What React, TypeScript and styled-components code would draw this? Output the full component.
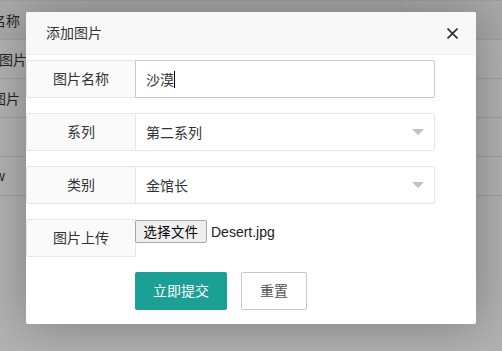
import styled, { createGlobalStyle } from "styled-components";

const GlobalStyle = createGlobalStyle`
    html, body {
        margin: 0;
        padding: 0;
        background: #ffffff;
    }
    body {
        font-family: "Liberation Sans", "Noto Sans CJK SC", sans-serif;
        font-size: 14px;
        color: #333;
    }
    * {
        box-sizing: border-box;
    }
`

const ROWS = [
    {name: "中英文图片"},
    {name: "封面图片"},
    {name: ""},
    {name: "new"},
]

const FIELDS = [
    {label: "系列", value: "第二系列"},
    {label: "类别", value: "金馆长"},
]

const App = () => {
    return (
        <>
            <GlobalStyle/>
            <Page>
                {/* 뒤에 깔린 목록 테이블 */}
                <Table>
                    <HeadRow>
                        <NameCell>图片名称</NameCell>
                        <Cell $divider/>
                        <Cell/>
                    </HeadRow>
                    {
                        ROWS.map((row, i) => (
                            <BodyRow key={i}>
                                <NameCell>{row.name}</NameCell>
                                <Cell/>
                                <Cell/>
                            </BodyRow>
                        ))
                    }
                </Table>

                <Shade/>

                <Layer>
                    <LayerTitle>
                        添加图片
                        <CloseBtn>
                            <svg width="11" height="11" viewBox="0 0 11 11">
                                <path d="M0.5 0.5 L10.5 10.5 M10.5 0.5 L0.5 10.5" stroke="#2e2d3c" strokeWidth="1.6"/>
                            </svg>
                        </CloseBtn>
                    </LayerTitle>
                    <LayerContent>
                        <FormItem>
                            <FormLabel>图片名称</FormLabel>
                            <InputBlock>
                                <TextInput $focused={true}>沙漠<Caret/></TextInput>
                            </InputBlock>
                        </FormItem>
                        {
                            FIELDS.map((f) => (
                                <FormItem key={f.label}>
                                    <FormLabel>{f.label}</FormLabel>
                                    <InputBlock>
                                        <TextInput $focused={false}>
                                            {f.value}
                                            <SelectEdge/>
                                        </TextInput>
                                    </InputBlock>
                                </FormItem>
                            ))
                        }
                        <FormItem>
                            <FormLabel>图片上传</FormLabel>
                            <FileBlock>
                                <FileButton>选择文件</FileButton>
                                <FileName>Desert.jpg</FileName>
                            </FileBlock>
                        </FormItem>
                        <ButtonRow>
                            <Btn $label={"submit"}>立即提交</Btn>
                            <Btn $label={"reset"}>重置</Btn>
                        </ButtonRow>
                    </LayerContent>
                </Layer>
            </Page>
        </>
    )
}

export default App

const Page = styled.div`
    position: relative;
    width: 502px;
    height: 351px;
    overflow: hidden;
`

const Table = styled.div`
    margin-left: -64px;
    padding-top: 1px;
    width: 600px;
    border-top: 1px solid #e6e6e6;
`

const HeadRow = styled.div`
    display: grid;
    grid-template-columns: 112px 354px 1fr;
    height: 39px;
    background: #f2f2f2;
    border-bottom: 1px solid #e6e6e6;
    margin-top: -1px;
`

const BodyRow = styled.div`
    display: grid;
    grid-template-columns: 112px 354px 1fr;
    height: 39px;
    border-bottom: 1px solid #e6e6e6;
`

const NameCell = styled.div`
    display: flex;
    align-items: center;
    justify-content: center;
    white-space: nowrap;
    color: #333;
`

const Cell = styled.div<{ $divider?: boolean }>`
    border-right: ${(props) => props.$divider ? "1px solid #e6e6e6" : "none"};
`

const Shade = styled.div`
    position: absolute;
    inset: 0;
    background: rgba(0, 0, 0, 0.3);
`

const Layer = styled.div`
    position: absolute;
    left: 26px;
    top: 12px;
    width: 450px;
    background: #ffffff;
    border-radius: 2px;
    box-shadow: 1px 1px 50px rgba(0, 0, 0, 0.3);
`

const LayerTitle = styled.div`
    position: relative;
    height: 43px;
    line-height: 42px;
    padding: 0 80px 0 20px;
    background: #f8f8f8;
    border-bottom: 1px solid #eeeeee;
    border-radius: 2px 2px 0 0;
    font-size: 14px;
    color: #333;
`

const CloseBtn = styled.span`
    position: absolute;
    right: 18px;
    top: 16px;
    width: 11px;
    height: 11px;
    display: flex;

    svg {
        display: block;
    }
`

const LayerContent = styled.div`
    padding: 5px 0 0 0;
    display: flex;
    flex-direction: column;
    gap: 15px;
`

const FormItem = styled.div`
    display: flex;
    align-items: flex-start;
    height: 38px;
`

const FormLabel = styled.div`
    width: 110px;
    height: 38px;
    padding: 8px 15px;
    line-height: 20px;
    text-align: center;
    background: #fafafa;
    border: 1px solid #e6e6e6;
    border-radius: 2px 0 0 2px;
    color: #333;
    white-space: nowrap;
`

const InputBlock = styled.div`
    width: 300px;
    margin-left: -1px;
`

const TextInput = styled.div<{ $focused: boolean }>`
    position: relative;
    display: flex;
    align-items: center;
    height: 38px;
    padding-left: 10px;
    border: 1px solid ${(props) => props.$focused ? "#c9c9c9" : "#e6e6e6"};
    border-radius: 0 2px 2px 0;
    background: #ffffff;
    color: #333;
`

const Caret = styled.span`
    display: inline-block;
    width: 1px;
    height: 17px;
    background: #000000;
`

const SelectEdge = styled.i`
    position: absolute;
    right: 10px;
    top: 50%;
    margin-top: -3px;
    width: 0;
    height: 0;
    border-left: 6px solid transparent;
    border-right: 6px solid transparent;
    border-top: 6px solid #c2c2c2;
`

const FileBlock = styled.div`
    display: flex;
    align-items: center;
    gap: 4px;
    margin-top: 1px;
    margin-left: -1px;
`

const FileButton = styled.div`
    width: 72px;
    height: 23px;
    line-height: 21px;
    text-align: center;
    font-size: 13.3px;
    color: #000;
    background: #efefef;
    border: 1px solid #a6a6a6;
    border-radius: 2px;
    font-family: "Noto Sans CJK SC", sans-serif;
    letter-spacing: 0.5px;
`

const FileName = styled.span`
    font-size: 14px;
    color: #222;
`

const ButtonRow = styled.div`
    display: flex;
    gap: 14px;
    padding-left: 109px;
    padding-bottom: 14px;
`

const Btn = styled.button<{ $label: string }>`
    height: 38px;
    padding: 0 ${(props) => props.$label === "submit" ? "18px" : "18px"};
    line-height: 36px;
    font-size: 14px;
    font-family: "Liberation Sans", "Noto Sans CJK SC", sans-serif;
    border-radius: 2px;
    cursor: pointer;
    color: ${(props) => props.$label === "submit" ? "#ffffff" : "#555555"};
    background: ${(props) => props.$label === "submit" ? "#1aa094" : "#ffffff"};
    border: ${(props) => props.$label === "submit" ? "none" : "1px solid #c9c9c9"};
`
